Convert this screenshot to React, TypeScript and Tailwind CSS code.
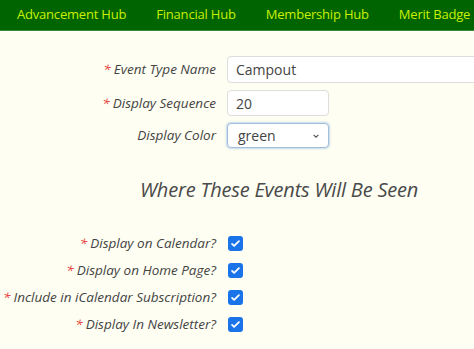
import React from "react";

const navItems = ["Advancement Hub", "Financial Hub", "Membership Hub", "Merit Badge"];

const checkRows = [
  "Display on Calendar?",
  "Display on Home Page?",
  "Include in iCalendar Subscription?",
  "Display In Newsletter?",
];

function Check() {
  return (
    <span className="w-[15px] h-[15px] rounded-[3px] bg-[#1a73e8] flex items-center justify-center">
      <svg viewBox="0 0 16 16" className="w-[11px] h-[11px]" fill="none" stroke="white" strokeWidth="2.6" strokeLinecap="round" strokeLinejoin="round">
        <path d="M3 8.5l3 3 7-7" />
      </svg>
    </span>
  );
}

export default function App() {
  return (
    <div className="w-[474px] h-[349px] overflow-hidden bg-[#fefef2] font-['Open_Sans',sans-serif] text-[#444]">
      {/* top nav */}
      <div className="h-[31px] bg-[#006400] border-b border-[#3a8a3a] flex items-center pl-[17px] gap-[30px] whitespace-nowrap text-[13px] font-medium text-[#c8f000] tracking-[-0.2px]">
        {navItems.map((n) => (
          <span key={n}>{n}</span>
        ))}
      </div>

      {/* main fields */}
      <div className="pt-[25px] italic text-[13.5px]">
        <div className="flex items-center h-[27px]">
          <label className="w-[217px] shrink-0 text-right pr-[1px]">
            <span className="text-[#e53935] mr-[3px]">*</span>Event Type Name
          </label>
          <input
            readOnly
            value="Campout"
            className="ml-[10px] w-[260px] shrink-0 h-[27px] bg-white border border-[#ddd] rounded-[4px] px-[8px] not-italic text-[14px] text-[#444] outline-none"
          />
        </div>
        <div className="flex items-center h-[26px] mt-[7px]">
          <label className="w-[217px] shrink-0 text-right pr-[1px]">
            <span className="text-[#e53935] mr-[3px]">*</span>Display Sequence
          </label>
          <input
            readOnly
            value="20"
            className="ml-[10px] w-[102px] shrink-0 h-[26px] bg-white border border-[#ddd] rounded-[4px] px-[8px] not-italic text-[14px] text-[#444] outline-none"
          />
        </div>
        <div className="flex items-center h-[25px] mt-[7px]">
          <label className="w-[217px] shrink-0 text-right pr-[1px]">Display Color</label>
          <div className="ml-[10px] w-[102px] shrink-0 h-[25px] bg-white border border-[#9fbfdc] rounded-[4px] shadow-[0_0_2px_1px_rgba(130,170,220,0.45)] pl-[10px] pr-[8px] flex items-center justify-between not-italic text-[14px]">
            <span>green</span>
            <svg viewBox="0 0 10 10" className="w-[8px] h-[8px]" fill="none" stroke="#555" strokeWidth="1.4">
              <path d="M2 3.5l3 3 3-3" />
            </svg>
          </div>
        </div>
      </div>

      {/* section heading */}
      <div className="mt-[27px] pl-[140px] italic text-[20px] text-[#4a4a4a] tracking-[-0.2px] whitespace-nowrap">
        Where These Events Will Be Seen
      </div>

      {/* checkboxes */}
      <div className="mt-[31px] flex flex-col gap-[12px] italic text-[13.5px]">
        {checkRows.map((r) => (
          <div key={r} className="flex items-center h-[15px]">
            <label className="w-[217px] shrink-0 text-right pr-[1px] whitespace-nowrap">
              <span className="text-[#e53935] mr-[3px]">*</span>
              {r}
            </label>
            <span className="ml-[11px]">
              <Check />
            </span>
          </div>
        ))}
      </div>
    </div>
  );
}
